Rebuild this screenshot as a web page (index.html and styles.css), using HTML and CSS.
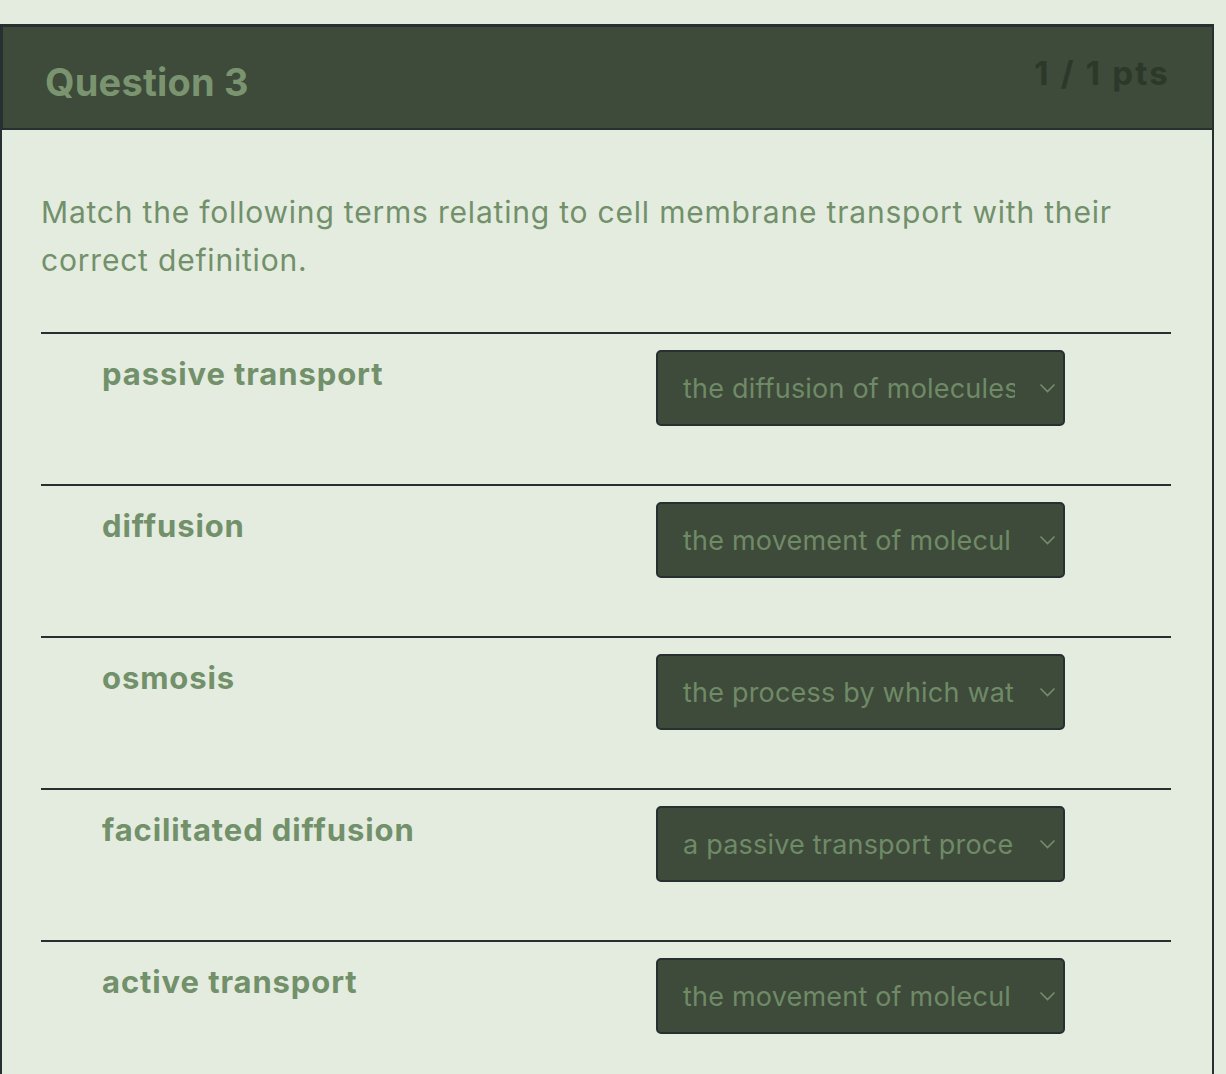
FILE: index.html
```html
<!DOCTYPE html>
<html lang="en">

<head>
    <meta charset="UTF-8">
    <meta name="viewport" content="width=device-width, initial-scale=1.0">
    <title>Question 3</title>
    <link rel="stylesheet" href="styles.css">
</head>

<body>
    <div class="question">
        <div class="questionHeader">
            <h2>Question 3</h2>
            <span class="pontos">1 / 1 pts</span>
        </div>
        <div class="questionBody">
            <p class="enunciado">Match the following terms relating to cell membrane transport with their correct definition.</p>
            <div class="linha">
                <span class="termo">passive transport</span>
                <div class="escolha">
                    <span>the diffusion of molecules</span>
                    <svg viewBox="0 0 16 10" width="17" height="10"><path d="M1 1.5 L8 8.5 L15 1.5" /></svg>
                </div>
            </div>
            <div class="linha">
                <span class="termo">diffusion</span>
                <div class="escolha">
                    <span>the movement of molecul</span>
                    <svg viewBox="0 0 16 10" width="17" height="10"><path d="M1 1.5 L8 8.5 L15 1.5" /></svg>
                </div>
            </div>
            <div class="linha">
                <span class="termo">osmosis</span>
                <div class="escolha">
                    <span>the process by which wat</span>
                    <svg viewBox="0 0 16 10" width="17" height="10"><path d="M1 1.5 L8 8.5 L15 1.5" /></svg>
                </div>
            </div>
            <div class="linha">
                <span class="termo">facilitated diffusion</span>
                <div class="escolha">
                    <span>a passive transport proce</span>
                    <svg viewBox="0 0 16 10" width="17" height="10"><path d="M1 1.5 L8 8.5 L15 1.5" /></svg>
                </div>
            </div>
            <div class="linha">
                <span class="termo">active transport</span>
                <div class="escolha">
                    <span>the movement of molecul</span>
                    <svg viewBox="0 0 16 10" width="17" height="10"><path d="M1 1.5 L8 8.5 L15 1.5" /></svg>
                </div>
            </div>
        </div>
    </div>
</body>

</html>
```

FILE: styles.css
```css
body {
    margin: 0;
    background-color: #e4ece0;
    font-family: "Inter", "Noto Sans", sans-serif;
    color: #72906a;
}

.question {
    margin-top: 24px;
    width: 1210px;
    border-left: 2px solid #263030;
    border-right: 2px solid #263030;
    height: 1050px;
}

.questionHeader {
    display: flex;
    justify-content: space-between;
    align-items: flex-start;
    height: 101px;
    background-color: #3e4a3a;
    border-top: 3px solid #263030;
    border-bottom: 2px solid #263030;
    border-left: 1px solid #263030;
    padding: 0 42px 0 42px;
}

.questionHeader h2 {
    margin: 33px 0 0 0;
    font-size: 38px;
    font-weight: 700;
    line-height: 44px;
    color: #7a9470;
    letter-spacing: 0.2px;
}

.pontos {
    margin-top: 26px;
    font-size: 33px;
    font-weight: 700;
    line-height: 40px;
    color: #2c3829;
    letter-spacing: 2.2px;
}

.questionBody {
    padding: 0 41px 0 39px;
}

.enunciado {
    margin: 58px 0 48px 0;
    font-size: 30px;
    line-height: 48px;
    letter-spacing: 0.8px;
}

.linha {
    display: grid;
    grid-template-columns: 615px 409px;
    height: 150px;
    border-top: 2px solid #263030;
}

.termo {
    padding: 22px 0 0 61px;
    font-size: 31px;
    font-weight: 700;
    line-height: 36px;
    letter-spacing: 0.9px;
}

.escolha {
    margin-top: 16px;
    height: 72px;
    display: flex;
    align-items: center;
    justify-content: space-between;
    background-color: #3e4a3a;
    border: 2px solid #263030;
    border-radius: 5px;
    padding: 0 7px 0 25px;
    font-size: 27px;
    letter-spacing: 0.2px;
    color: #6f8a66;
}

.escolha span {
    width: 332px;
    white-space: nowrap;
    overflow: hidden;
}

.escolha svg {
    fill: none;
    stroke: #728d69;
    stroke-width: 1.6;
}
```
